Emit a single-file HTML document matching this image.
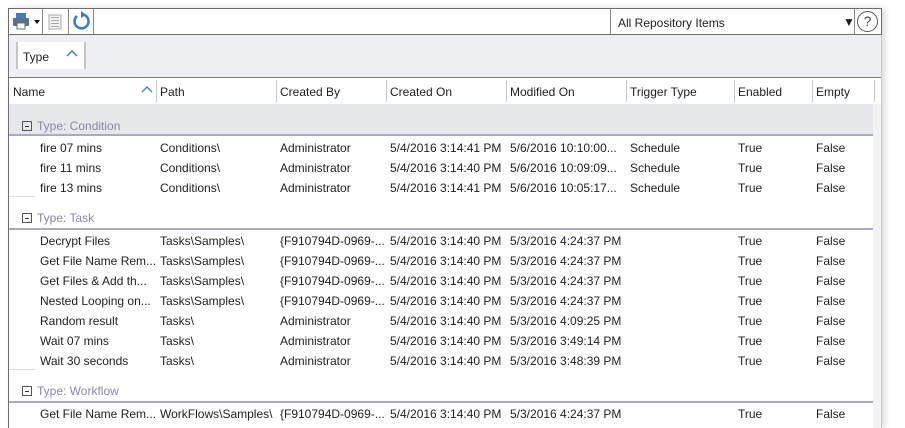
<!DOCTYPE html>
<html><head><meta charset="utf-8"><style>
*{margin:0;padding:0;box-sizing:border-box}
body{width:905px;height:427px;background:#fff;position:relative;overflow:hidden;font-family:"Liberation Sans",sans-serif;font-size:12px;color:#1e1e1e}
.a{position:absolute;white-space:nowrap}
#frame{position:absolute;left:8px;top:8px;width:874px;height:420px;border-left:1px solid #6e6e6e;border-right:1px solid #c8c8c8;box-shadow:3px 0 6px rgba(0,0,0,.15)}
.t{position:absolute;line-height:20px;white-space:nowrap}
.sep{position:absolute;top:80px;width:1px;height:22px;background:#c8c8c8}
.gl{position:absolute;left:9px;width:864px;height:2px;background:#a9a9c2}
.gh{position:absolute;left:22px;color:#8a86a8;line-height:20px;font-size:12px}
.box{display:inline-block;width:10px;height:10px;border:1px solid #555;position:relative;vertical-align:-1px;margin-right:5px}
.box:after{content:"";position:absolute;left:2px;top:4px;width:4px;height:1px;background:#333}
</style></head><body>
<div id="frame"></div>
<div class="a" style="left:8px;top:8px;width:874px;height:27px;border:1px solid #6e6e6e;background:#fff"></div>
<div class="a" style="left:42px;top:9px;width:1px;height:25px;background:#888"></div>
<div class="a" style="left:68px;top:9px;width:1px;height:25px;background:#888"></div>
<div class="a" style="left:93px;top:9px;width:1px;height:25px;background:#888"></div>
<svg class="a" style="left:12px;top:12px" width="30" height="20" viewBox="0 0 30 20">
<rect x="4" y="1" width="10" height="5" fill="#3d7ebf"/>
<rect x="1" y="6" width="16" height="8" rx="1" fill="#5a6e86"/>
<rect x="5" y="11" width="8" height="6" fill="#fff" stroke="#5a6e86"/>
<polygon points="22,8 28,8 25,12" fill="#111"/>
</svg>
<svg class="a" style="left:48px;top:14px" width="14" height="16"><g fill="#aaa"><rect x="1" y="1" width="12" height="14" fill="#f2f2f2" stroke="#aaa"/><rect x="3" y="3" width="8" height="1"/><rect x="3" y="6" width="8" height="1"/><rect x="3" y="9" width="8" height="1"/><rect x="3" y="12" width="8" height="1"/></g></svg>
<svg class="a" style="left:71px;top:11px" width="20" height="20" viewBox="0 0 20 20"><path d="M6 5 A7 7 0 1 0 12 3.5" fill="none" stroke="#3a7ac0" stroke-width="2.5"/><polygon points="10,0 15,4 10,7" fill="#3a7ac0"/></svg>
<div class="a" style="left:610px;top:9px;width:1px;height:25px;background:#888"></div>
<div class="t" style="left:618px;top:13px">All Repository Items</div>
<div class="a" style="left:843px;top:12px;font-size:12px;line-height:20px">▼</div>
<div class="a" style="left:854px;top:9px;width:1px;height:25px;background:#888"></div>
<div class="a" style="left:857px;top:11px;width:21px;height:21px;border:1.5px solid #555;border-radius:50%;text-align:center;line-height:18px;font-size:14px;color:#444">?</div>
<div class="a" style="left:9px;top:35px;width:872px;height:42px;background:#eeeff2"></div>
<div class="a" style="left:16px;top:42px;width:70px;height:27px;background:#fff;border-left:2px solid #c4c4c4;border-right:2px solid #c4c4c4"></div>
<div class="t" style="left:23px;top:47px">Type</div>
<svg class="a" style="left:66px;top:50px" width="12" height="8"><path d="M1 6 L6 1 L11 6" fill="none" stroke="#4a7cb0" stroke-width="1.5"/></svg>
<div class="a" style="left:9px;top:77px;width:872px;height:1px;background:#7a7a7a"></div>
<div class="t" style="left:13px;top:82px">Name</div>
<svg class="a" style="left:141px;top:86px" width="12" height="8"><path d="M1 6 L6 1 L11 6" fill="none" stroke="#4a7cb0" stroke-width="1.3"/></svg>
<div class="sep" style="left:156px"></div><div class="t" style="left:160px;top:82px">Path</div>
<div class="sep" style="left:276px"></div><div class="t" style="left:280px;top:82px">Created By</div>
<div class="sep" style="left:386px"></div><div class="t" style="left:390px;top:82px">Created On</div>
<div class="sep" style="left:506px"></div><div class="t" style="left:510px;top:82px">Modified On</div>
<div class="sep" style="left:626px"></div><div class="t" style="left:630px;top:82px">Trigger Type</div>
<div class="sep" style="left:734px"></div><div class="t" style="left:738px;top:82px">Enabled</div>
<div class="sep" style="left:812px"></div><div class="t" style="left:816px;top:82px">Empty</div>
<div class="sep" style="left:874px"></div>
<div class="a" style="left:873px;top:104px;width:8px;height:324px;background:#f2f2f2"></div>
<div class="a" style="left:9px;top:104px;width:864px;height:31px;background:#e5e7eb"></div>
<div class="gh" style="top:116px"><span class="box"></span>Type: Condition</div>
<div class="gl" style="top:134px"></div>
<div class="a" style="left:9px;top:196px;width:26px;height:1px;background:#ddd"></div>
<div class="gh" style="top:208px"><span class="box"></span>Type: Task</div>
<div class="gl" style="top:228px"></div>
<div class="a" style="left:9px;top:369px;width:26px;height:1px;background:#ddd"></div>
<div class="gh" style="top:381px"><span class="box"></span>Type: Workflow</div>
<div class="gl" style="top:401px"></div>
<div id="rows"></div>
<script>
const R=[
[138,"fire 07 mins","Conditions\\","Administrator","5/4/2016 3:14:41 PM","5/6/2016 10:10:00...","Schedule"],
[158,"fire 11 mins","Conditions\\","Administrator","5/4/2016 3:14:40 PM","5/6/2016 10:09:09...","Schedule"],
[178,"fire 13 mins","Conditions\\","Administrator","5/4/2016 3:14:41 PM","5/6/2016 10:05:17...","Schedule"],
[231,"Decrypt Files","Tasks\\Samples\\","{F910794D-0969-...","5/4/2016 3:14:40 PM","5/3/2016 4:24:37 PM",""],
[251,"Get File Name Rem...","Tasks\\Samples\\","{F910794D-0969-...","5/4/2016 3:14:40 PM","5/3/2016 4:24:37 PM",""],
[271,"Get Files & Add th...","Tasks\\Samples\\","{F910794D-0969-...","5/4/2016 3:14:40 PM","5/3/2016 4:24:37 PM",""],
[291,"Nested Looping on...","Tasks\\Samples\\","{F910794D-0969-...","5/4/2016 3:14:40 PM","5/3/2016 4:24:37 PM",""],
[311,"Random result","Tasks\\","Administrator","5/4/2016 3:14:40 PM","5/3/2016 4:09:25 PM",""],
[331,"Wait 07 mins","Tasks\\","Administrator","5/4/2016 3:14:40 PM","5/3/2016 3:49:14 PM",""],
[351,"Wait 30 seconds","Tasks\\","Administrator","5/4/2016 3:14:40 PM","5/3/2016 3:48:39 PM",""],
[404,"Get File Name Rem...","WorkFlows\\Samples\\","{F910794D-0969-...","5/4/2016 3:14:40 PM","5/3/2016 4:24:37 PM",""]];
const X=[40,160,280,390,510,630];let h="";
for(const r of R){for(let i=0;i<6;i++)h+=`<div class="t" style="left:${X[i]}px;top:${r[0]}px">${r[i+1].replace(/&/g,"&amp;")}</div>`;
h+=`<div class="t" style="left:738px;top:${r[0]}px">True</div><div class="t" style="left:816px;top:${r[0]}px">False</div>`;}
document.getElementById("rows").innerHTML=h;
</script>
</body></html>
